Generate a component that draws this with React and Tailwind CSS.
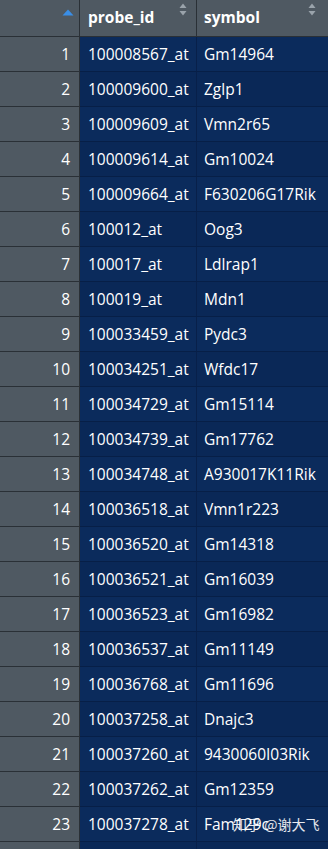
import React from "react";

const rows = [
  ["100008567_at", "Gm14964"],
  ["100009600_at", "Zglp1"],
  ["100009609_at", "Vmn2r65"],
  ["100009614_at", "Gm10024"],
  ["100009664_at", "F630206G17Rik"],
  ["100012_at", "Oog3"],
  ["100017_at", "Ldlrap1"],
  ["100019_at", "Mdn1"],
  ["100033459_at", "Pydc3"],
  ["100034251_at", "Wfdc17"],
  ["100034729_at", "Gm15114"],
  ["100034739_at", "Gm17762"],
  ["100034748_at", "A930017K11Rik"],
  ["100036518_at", "Vmn1r223"],
  ["100036520_at", "Gm14318"],
  ["100036521_at", "Gm16039"],
  ["100036523_at", "Gm16982"],
  ["100036537_at", "Gm11149"],
  ["100036768_at", "Gm11696"],
  ["100037258_at", "Dnajc3"],
  ["100037260_at", "9430060I03Rik"],
  ["100037262_at", "Gm12359"],
  ["100037278_at", "Fam129c"],
  ["", ""],
];

function SortBoth() {
  return (
    <svg width="8" height="13" viewBox="0 0 8 13" className="shrink-0">
      <path d="M4 0.5 L7.5 5 L0.5 5 Z" fill="#9aa3ab" />
      <path d="M4 12.5 L7.5 8 L0.5 8 Z" fill="#9aa3ab" />
    </svg>
  );
}

export default function App() {
  return (
    <div
      className="relative w-[328px] h-[849px] overflow-hidden bg-[#0b2a5a] text-white"
      style={{ fontFamily: '"Open Sans", "Noto Sans", "Noto Sans CJK SC", sans-serif' }}
    >
      {/* header */}
      <div className="grid grid-cols-[80px_117px_131px] h-[37px] bg-[#4f5962] border-b border-[#2a3036]">
        <div className="relative border-r border-[#2a3036]">
          <svg width="12" height="7" viewBox="0 0 12 7" className="absolute left-[62px] top-[9px]">
            <path d="M6 0.5 L11.5 6.5 L0.5 6.5 Z" fill="#3a8ee6" />
          </svg>
        </div>
        <div className="relative border-r border-[#2a3036] pl-[8px] pt-[7px] text-[15.5px] font-bold leading-[20px]">
          probe_id
          <div className="absolute right-[9px] top-[3px]">
            <SortBoth />
          </div>
        </div>
        <div className="relative pl-[7px] pt-[7px] text-[15.5px] font-bold leading-[20px]">
          symbol
          <div className="absolute right-[12px] top-[3px]">
            <SortBoth />
          </div>
        </div>
      </div>
      {rows.map((r, i) => (
        <div key={i} className="grid grid-cols-[80px_117px_131px] h-[35px] text-[15.5px] leading-[34px]">
          <div className="bg-[#4f5962] border-r border-[#2a3036] border-b border-b-[#2a3036] text-right pr-[9px]">
            {r[0] ? i + 1 : ""}
          </div>
          <div
            className={
              "border-r border-[#08204a] border-b border-b-[#071f47] pl-[8px] whitespace-nowrap overflow-hidden " +
              (i % 2 === 0 ? "bg-[#0b2b5c]" : "bg-[#0a2857]")
            }
          >
            {r[0]}
          </div>
          <div
            className={
              "border-b border-[#071f47] pl-[7px] whitespace-nowrap overflow-hidden " +
              (i % 2 === 0 ? "bg-[#0b2b5c]" : "bg-[#0a2857]")
            }
          >
            {r[1]}
          </div>
        </div>
      ))}
      <div
        className="absolute left-[233px] top-[814px] text-[14px] leading-[20px] text-white/90"
        style={{ fontFamily: '"Noto Sans CJK SC", sans-serif' }}
      >
        知乎 @谢大飞
      </div>
    </div>
  );
}
